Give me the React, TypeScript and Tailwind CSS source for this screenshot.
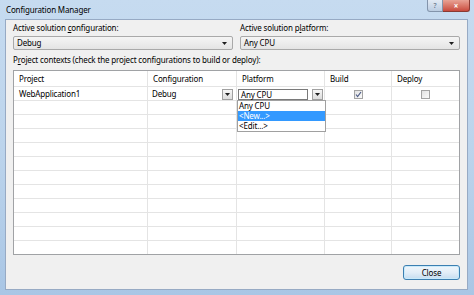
import React from "react";

const font = { fontFamily: '"Noto Sans", "Open Sans", sans-serif' };

const Arrow: React.FC = () => (
	<svg width="5" height="3" viewBox="0 0 5 3">
		<path d="M0 0h5L2.5 3z" fill="#1e1e1e" />
	</svg>
);

const Combo: React.FC<{ value: string }> = ({ value }) => (
	<div className="flex items-center h-[14px] border border-[#a9a9a9] rounded-[2px] bg-gradient-to-b from-[#f5f5f5] to-[#e4e4e4] pl-[3px] pr-[5px]">
		<span className="flex-1 leading-none text-black">{value}</span>
		<Arrow />
	</div>
);

const SmallBtn: React.FC = () => (
	<div className="flex items-center justify-center w-[11px] h-[11px] border border-[#a0a0a0] bg-gradient-to-b from-[#f6f6f6] to-[#dcdcdc]">
		<Arrow />
	</div>
);

const Check: React.FC<{ checked?: boolean }> = ({ checked }) => (
	<div className="w-[9px] h-[9px] border border-[#a3a3a3] bg-gradient-to-br from-[#e2e2e2] to-[#fafafa] flex items-center justify-center">
		{checked && (
			<svg width="7" height="7" viewBox="0 0 7 7">
				<path d="M1 3.5l1.6 2L6 1" stroke="#4d5c86" strokeWidth="1.2" fill="none" />
			</svg>
		)}
	</div>
);

const cols = "grid grid-cols-[134px_89px_88px_67px_1fr]";
const cell = "border-r border-[#e4e4e4] last:border-r-0";

const App: React.FC = () => {
	const emptyRows = Array.from({ length: 11 });

	return (
		<div
			className="w-[474px] h-[295px] flex flex-col bg-gradient-to-b from-[#c6dbf0] via-[#bcd4ec] to-[#a9c6e5] overflow-hidden text-[8px] tracking-[-0.15px]"
			style={font}
		>
			{/* title bar */}
			<div className="h-[19px] flex items-center shrink-0 relative">
				<span className="ml-[6px] leading-none text-black">Configuration Manager</span>
				<div className="absolute right-[4px] top-0 flex">
					<div className="w-[16px] h-[12px] rounded-bl-[3px] border border-[#8394ab] border-t-0 bg-gradient-to-b from-[#e2eaf4] to-[#bccde2] flex items-center justify-center text-[7px] text-[#56667c] leading-none">
						?
					</div>
					<div className="w-[27px] h-[12px] rounded-br-[3px] border border-[#8a3a33] border-t-0 border-l-0 bg-gradient-to-b from-[#e8a295] to-[#c84a3e] flex items-center justify-center text-[8px] font-bold text-white leading-none">
						×
					</div>
				</div>
			</div>

			{/* client area */}
			<div className="ml-[5px] mr-[6px] h-[271px] shrink-0 border border-[#97aac4] bg-[#f0f0f0] flex flex-col px-[7px] pt-[1px] text-black">
				<div className="flex gap-[7px]">
					<div className="flex-1 flex flex-col gap-[1px]">
						<span className="leading-[14px]">
							Active solution <u>c</u>onfiguration:
						</span>
						<Combo value="Debug" />
					</div>
					<div className="flex-1 flex flex-col gap-[1px]">
						<span className="leading-[14px]">
							Active solution p<u>l</u>atform:
						</span>
						<Combo value="Any CPU" />
					</div>
				</div>

				<span className="leading-[14px] mt-[3px]">
					P<u>r</u>oject contexts (check the project configurations to build or deploy):
				</span>

				<div className="mt-[3px] h-[185px] border border-[#a0a2a5] bg-white flex flex-col overflow-hidden">
					<div className={`${cols} h-[16px] shrink-0 border-b border-[#e4e4e4]`}>
						{["Project", "Configuration", "Platform", "Build", "Deploy"].map((h) => (
							<div key={h} className={`${cell} pl-[5px] leading-[16px]`}>
								{h}
							</div>
						))}
					</div>

					<div className={`${cols} h-[14px] shrink-0 border-b border-[#e4e4e4]`}>
						<div className={`${cell} pl-[5px] leading-[14px]`}>WebApplication1</div>
						<div className={`${cell} pl-[4px] pr-[3px] flex items-center`}>
							<span className="flex-1 leading-[14px]">Debug</span>
							<SmallBtn />
						</div>
						<div className={`${cell} relative flex items-center pl-[1px] pr-[1px] gap-[4px]`}>
							<div className="w-[71px] h-[11px] border border-[#7a7a7a] bg-white pl-[2px] leading-[9px]">
								Any CPU
							</div>
							<SmallBtn />
							{/* open dropdown list */}
							<div className="absolute left-0 top-[13px] w-[89px] border border-[#a0a0a0] bg-white z-10 flex flex-col">
								<div className="h-[10px] pl-[1px] leading-[10px]">Any CPU</div>
								<div className="h-[10px] pl-[1px] leading-[10px] bg-[#3399ff] text-white">
									&lt;New...&gt;
								</div>
								<div className="h-[10px] pl-[1px] leading-[10px]">&lt;Edit...&gt;</div>
							</div>
						</div>
						<div className={`${cell} flex items-center justify-center`}>
							<Check checked />
						</div>
						<div className={`${cell} flex items-center justify-center`}>
							<Check />
						</div>
					</div>

					{emptyRows.map((_, i) => (
						<div key={i} className={`${cols} h-[14px] shrink-0 border-b border-[#e4e4e4]`}>
							<div className={cell} />
							<div className={cell} />
							<div className={cell} />
							<div className={cell} />
							<div className={cell} />
						</div>
					))}
					<div className={`${cols} flex-1`}>
						<div className={cell} />
						<div className={cell} />
						<div className={cell} />
						<div className={cell} />
						<div className={cell} />
					</div>
				</div>

				<div className="flex justify-end mt-[10px]">
					<button className="w-[57px] h-[15px] rounded-[3px] border border-[#3c7fb1] bg-gradient-to-b from-[#f0f6fb] via-[#e2eef8] to-[#c6ddf0] text-[8px] leading-none shadow-[inset_0_0_0_1px_#c8eafb]">
						Close
					</button>
				</div>
			</div>
		</div>
	);
};

export default App;
